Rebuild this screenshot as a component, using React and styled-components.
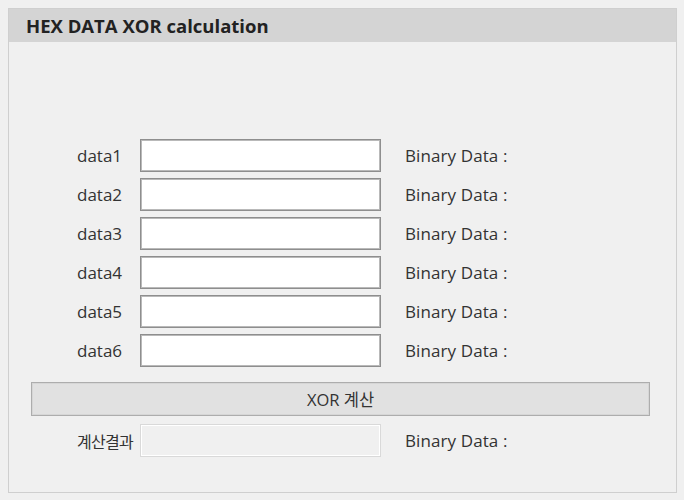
import React from 'react';
import styled, { createGlobalStyle } from 'styled-components';

// --- STYLES ---

const GlobalStyle = createGlobalStyle`
  html, body {
    margin: 0;
    padding: 0;
    background-color: #f0f0f0;
  }
  body {
    font-family: 'Open Sans', 'Noto Sans CJK KR', sans-serif;
    color: #333;
  }
`;

const Panel = styled.section`
  margin: 8px;
  width: 669px;
  height: 485px;
  box-sizing: border-box;
  border: 1px solid #cfcfcf;
  background-color: #f0f0f0;
  display: flex;
  flex-direction: column;
`;

const PanelHeader = styled.header`
  height: 33px;
  background-color: #d4d4d4;
  display: flex;
  align-items: center;
  padding-left: 17px;
  font-size: 18.5px;
  font-weight: 700;
  color: #222;
`;

const PanelBody = styled.div`
  padding: 97px 0 0 22px;
  display: flex;
  flex-direction: column;
`;

const RowList = styled.div`
  display: flex;
  flex-direction: column;
  gap: 6px;
`;

const Row = styled.div`
  display: flex;
  align-items: center;
  margin-left: 46px;
`;

const Label = styled.label`
  width: 63px;
  font-size: ${(p) => p.$size || 17}px;
  letter-spacing: ${(p) => (p.$size ? '-0.7px' : '0')};
  color: #333;
  white-space: nowrap;
`;

const HexInput = styled.input`
  width: 241px;
  height: 33px;
  box-sizing: border-box;
  margin: 0;
  padding: 0 6px;
  font-family: inherit;
  font-size: 15px;
  background-color: ${(p) => (p.readOnly ? '#f0f0f0' : '#ffffff')};
  border: 1px solid ${(p) => (p.readOnly ? '#d9d9d9' : '#8e8e8e')};
  box-shadow: inset 0 0 0 1px ${(p) => (p.readOnly ? '#ffffff' : '#b9b9b9')};
  outline: none;
`;

const BinaryText = styled.span`
  margin-left: 24px;
  font-size: 17px;
  letter-spacing: 0.1px;
  color: #333;
`;

const XorButton = styled.button`
  margin: 15px 0 8px 0;
  width: 619px;
  height: 34px;
  background-color: #e1e1e1;
  border: 1px solid #adadad;
  box-shadow: inset 0 0 0 1px #d6d6d6;
  font-family: inherit;
  font-size: 16.5px;
  color: #333;
  cursor: pointer;
`;

// --- COMPONENT ---

const fields = ['data1', 'data2', 'data3', 'data4', 'data5', 'data6'];

const App = () => {
  return (
    <>
      <GlobalStyle />
      <Panel>
        <PanelHeader>HEX DATA XOR calculation</PanelHeader>
        <PanelBody>
          <RowList>
            {fields.map((name) => (
              <Row key={name}>
                <Label htmlFor={name}>{name}</Label>
                <HexInput id={name} type="text" />
                <BinaryText>Binary Data :</BinaryText>
              </Row>
            ))}
          </RowList>
          <XorButton>XOR 계산</XorButton>
          <Row>
            <Label htmlFor="result" $size={16}>계산결과</Label>
            <HexInput id="result" type="text" readOnly />
            <BinaryText>Binary Data :</BinaryText>
          </Row>
        </PanelBody>
      </Panel>
    </>
  );
};

export default App;
